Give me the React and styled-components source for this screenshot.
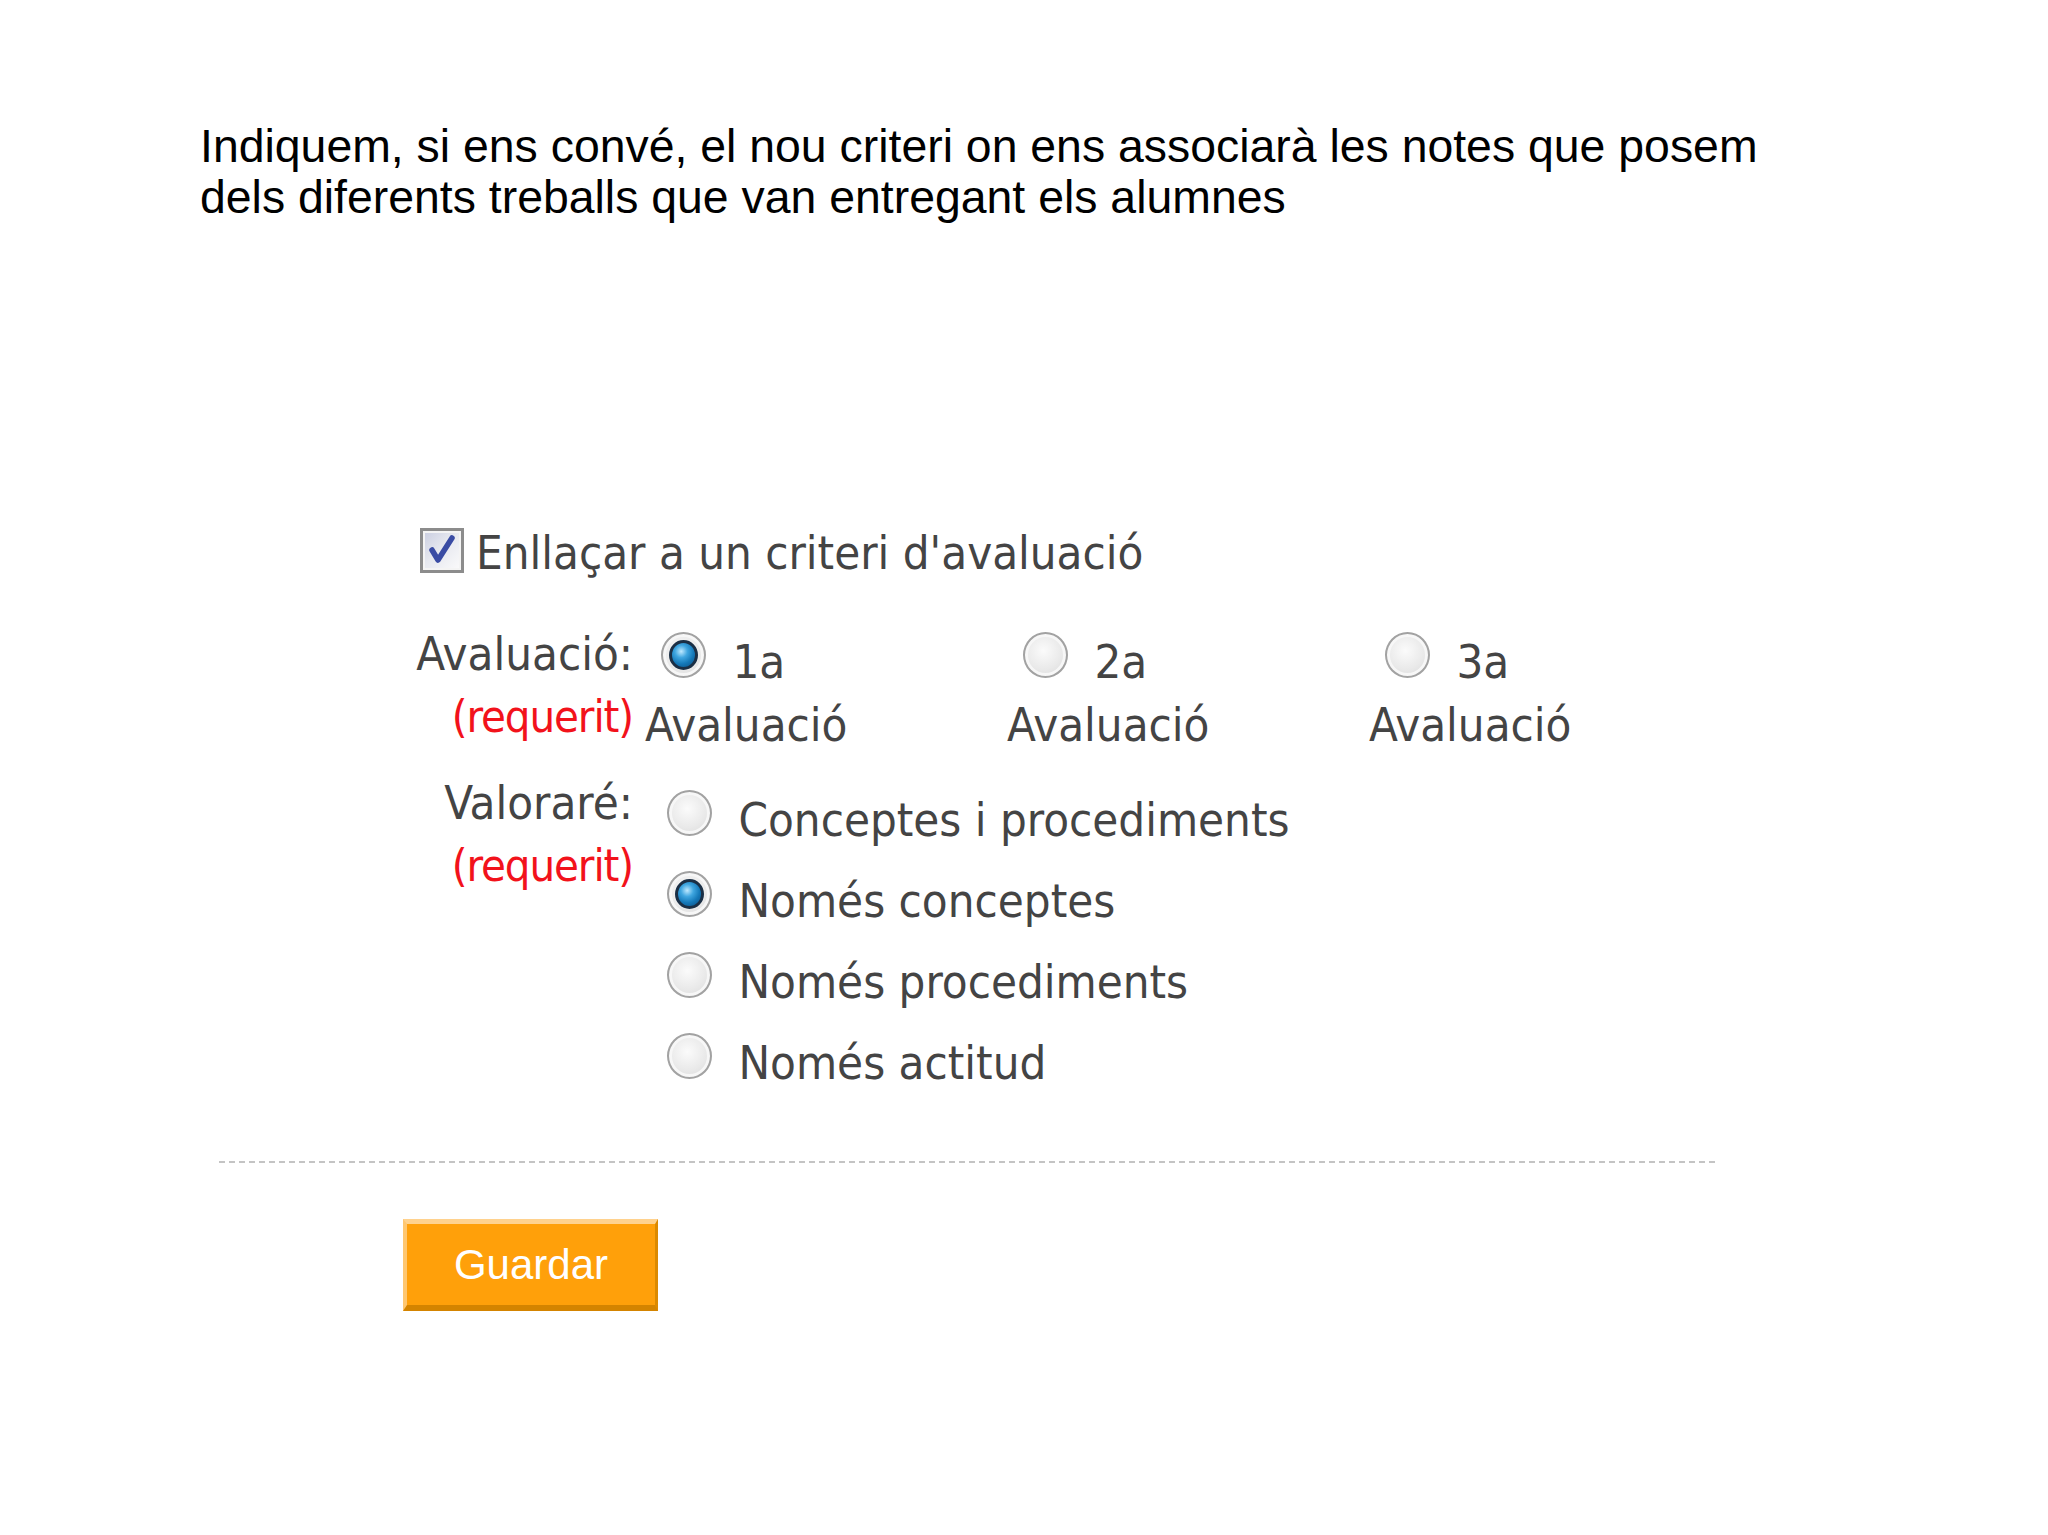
import React from "react";
import styled, { createGlobalStyle } from "styled-components";

const GlobalStyle = createGlobalStyle`
    body {
        margin: 0;
        background: #ffffff;
    }
`;

const App = () => {
    return (
        <>
            <GlobalStyle />
            <Slide>
                <Intro>
                    Indiquem, si ens convé, el nou criteri on ens associarà les notes que posem
                    <br />
                    dels diferents treballs que van entregant els alumnes
                </Intro>
                <Panel>
                    <CheckRow>
                        <CheckBox>
                            <svg viewBox="0 0 38 38" width="38" height="38">
                                <path
                                    d="M9 19 L15 29 L29 7"
                                    fill="none"
                                    stroke="#3a4ca4"
                                    strokeWidth="5.5"
                                    strokeLinecap="round"
                                    strokeLinejoin="round"
                                />
                            </svg>
                        </CheckBox>
                        Enllaçar a un criteri d'avaluació
                    </CheckRow>
                    <FieldGrid>
                        <Label>
                            Avaluació:
                            <Required>(requerit)</Required>
                        </Label>
                        <Options>
                            <Option>
                                <Radio $checked /> 1a Avaluació
                            </Option>
                            <Option>
                                <Radio /> 2a Avaluació
                            </Option>
                            <Option>
                                <Radio /> 3a Avaluació
                            </Option>
                        </Options>
                        <Label>
                            Valoraré:
                            <Required>(requerit)</Required>
                        </Label>
                        <List>
                            <ListItem>
                                <Radio $list /> Conceptes i procediments
                            </ListItem>
                            <ListItem>
                                <Radio $list $checked /> Només conceptes
                            </ListItem>
                            <ListItem>
                                <Radio $list /> Només procediments
                            </ListItem>
                            <ListItem>
                                <Radio $list /> Només actitud
                            </ListItem>
                        </List>
                    </FieldGrid>
                    <Divider />
                    <SaveButton>Guardar</SaveButton>
                </Panel>
            </Slide>
        </>
    );
};

const Slide = styled.div`
    box-sizing: border-box;
    width: 2048px;
    min-height: 1535px;
    padding: 121px 0 0 200px;
    background: #ffffff;
`;

const Intro = styled.p`
    margin: 0;
    font-family: "Liberation Sans", Arial, sans-serif;
    font-size: 46.4px;
    line-height: 51px;
    color: #000000;
`;

const Panel = styled.div`
    width: 1496px;
    margin: 298px 0 0 19px;
    font-family: "DejaVu Sans Condensed", "DejaVu Sans", sans-serif;
    font-stretch: condensed;
    font-size: 47px;
    line-height: 63px;
    color: #444444;
`;

const CheckRow = styled.div`
    padding-left: 201px;
    margin-bottom: 38px;
`;

const CheckBox = styled.span`
    display: inline-flex;
    align-items: center;
    justify-content: center;
    box-sizing: border-box;
    width: 44px;
    height: 45px;
    margin: 0 12px 9px 0;
    border: 3px solid #8c8c8c;
    background: linear-gradient(135deg, #c9cde0 0%, #e6e8ef 45%, #fbfbfb 100%);
    box-shadow: inset 0 0 0 2px #f4f4f4;
    vertical-align: baseline;
`;

const FieldGrid = styled.div`
    display: grid;
    grid-template-columns: 223px 1fr;
    column-gap: 12px;
    row-gap: 15px;
    align-items: start;
    padding-left: 191px;
`;

const Label = styled.div`
    text-align: right;
`;

const Required = styled.span`
    display: block;
    font-size: 45px;
    letter-spacing: -1.1px;
    color: #f2121b;
`;

const Options = styled.div`
    display: flex;
`;

const Option = styled.div`
    box-sizing: border-box;
    width: 362px;
    padding-right: 64px;
`;

const List = styled.div`
    padding: 9px 0 0 22px;
`;

const ListItem = styled.div`
    margin-bottom: 10px;
    white-space: nowrap;
`;

const Radio = styled.span`
    position: relative;
    display: inline-block;
    box-sizing: border-box;
    width: 45px;
    height: 46px;
    margin: 10px 13px 0 ${(p) => (p.$list ? "0" : "16px")};
    border-radius: 50%;
    border: 2px solid #a2a2a2;
    background: radial-gradient(circle at 45% 40%, #fbfbfb 0%, #e9e9e9 55%, #d6d6d6 100%);
    box-shadow: inset 0 0 0 3px #f7f7f7;
    vertical-align: baseline;

    &::after {
        content: "";
        display: ${(p) => (p.$checked ? "block" : "none")};
        position: absolute;
        top: 6px;
        left: 6px;
        width: 29px;
        height: 30px;
        box-sizing: border-box;
        border-radius: 50%;
        border: 3px solid #1b2f45;
        background: radial-gradient(circle at 40% 35%, #bfe9ff 0%, #3fa6e0 30%, #1478b8 60%, #0b4a7c 100%);
    }
`;

const Divider = styled.div`
    margin-top: 57px;
    border-top: 2px dashed #c4c4c4;
`;

const SaveButton = styled.button`
    display: block;
    box-sizing: border-box;
    width: 255px;
    height: 92px;
    margin: 56px 0 0 184px;
    padding: 0;
    border-style: solid;
    border-width: 5px 3px 6px 4px;
    border-color: #ffd28e #dc8a00 #d48400 #ffc770;
    background: #ffa00a;
    font-family: "Liberation Sans", Arial, sans-serif;
    font-size: 42px;
    color: #ffffff;
    cursor: pointer;
`;

export default App;
